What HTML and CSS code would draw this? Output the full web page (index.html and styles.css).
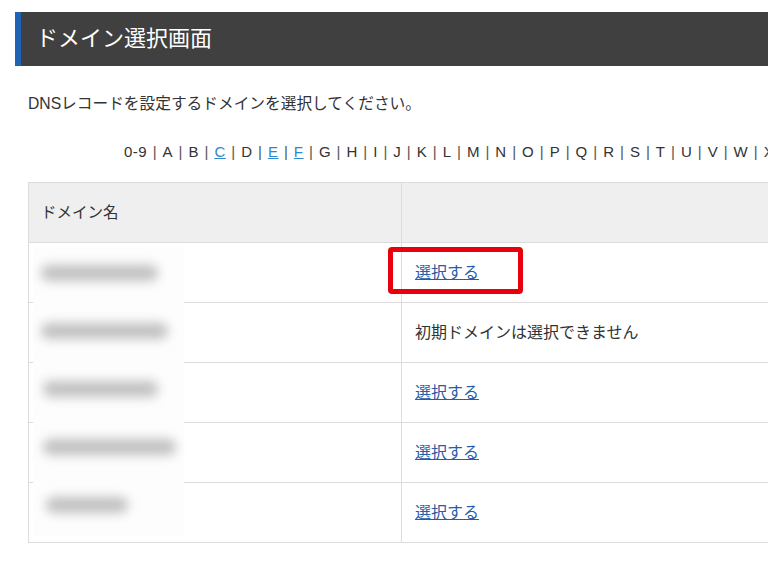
FILE: index.html
```html
<!DOCTYPE html>
<html lang="ja">
<head>
<meta charset="utf-8">
<title>ドメイン選択画面</title>
<link rel="stylesheet" href="styles.css">
</head>
<body>
<div class="page">
  <h1 class="title-bar">ドメイン選択画面</h1>
  <p class="lead">DNSレコードを設定するドメインを選択してください。</p>
  <nav class="alpha">
    <span>0-9</span><span class="sep">|</span>
    <span>A</span><span class="sep">|</span>
    <span>B</span><span class="sep">|</span>
    <a href="#">C</a><span class="sep">|</span>
    <span>D</span><span class="sep">|</span>
    <a href="#">E</a><span class="sep">|</span>
    <a href="#">F</a><span class="sep">|</span>
    <span>G</span><span class="sep">|</span>
    <span>H</span><span class="sep">|</span>
    <span>I</span><span class="sep">|</span>
    <span>J</span><span class="sep">|</span>
    <span>K</span><span class="sep">|</span>
    <span>L</span><span class="sep">|</span>
    <span>M</span><span class="sep">|</span>
    <span>N</span><span class="sep">|</span>
    <span>O</span><span class="sep">|</span>
    <span>P</span><span class="sep">|</span>
    <span>Q</span><span class="sep">|</span>
    <span>R</span><span class="sep">|</span>
    <span>S</span><span class="sep">|</span>
    <span>T</span><span class="sep">|</span>
    <span>U</span><span class="sep">|</span>
    <span>V</span><span class="sep">|</span>
    <span>W</span><span class="sep">|</span>
    <span>X</span><span class="sep">|</span>
    <span>Y</span><span class="sep">|</span>
    <span>Z</span>
  </nav>
  <div class="table">
    <div class="cell head c1">ドメイン名</div>
    <div class="cell head c2"></div>

    <div class="cell c1"></div>
    <div class="cell c2 marked"><a href="#">選択する</a><span class="highlight"></span></div>

    <div class="cell c1"></div>
    <div class="cell c2">初期ドメインは選択できません</div>

    <div class="cell c1"></div>
    <div class="cell c2"><a href="#">選択する</a></div>

    <div class="cell c1"></div>
    <div class="cell c2"><a href="#">選択する</a></div>

    <div class="cell c1"></div>
    <div class="cell c2"><a href="#">選択する</a></div>

    <div class="blur-patch">
      <div class="blur-row"><span class="blur w1"></span></div>
      <div class="blur-row"><span class="blur w2"></span></div>
      <div class="blur-row"><span class="blur w3"></span></div>
      <div class="blur-row"><span class="blur w4"></span></div>
      <div class="blur-row"><span class="blur w5"></span></div>
    </div>
  </div>
</div>
</body>
</html>
```
FILE: styles.css
```css
html, body {
  margin: 0;
  padding: 0;
  background: #fff;
  overflow: hidden;
}
body {
  font-family: "Liberation Sans", "Noto Sans CJK JP", sans-serif;
  color: #333;
  font-size: 15.5px;
}
.page {
  padding-top: 12px;
  width: 1000px;
}
.title-bar {
  margin: 0 0 0 15px;
  height: 54px;
  box-sizing: border-box;
  background: #404040;
  border-left: 6px solid #1f63b5;
  color: #fff;
  font-size: 22px;
  font-weight: normal;
  line-height: 54px;
  padding-left: 15px;
}
.lead {
  margin: 28px 0 0 28px;
  line-height: 20px;
  font-size: 15.7px;
}
.alpha {
  margin: 28px 0 0 124px;
  line-height: 20px;
  white-space: nowrap;
  font-size: 15px;
  letter-spacing: 0.5px;
  display: flex;
}
.alpha a {
  color: #2f86cf;
  text-decoration: underline;
}
.alpha .sep {
  margin: 0 5.5px;
  color: #555;
}
.table {
  position: relative;
  margin: 20px 0 0 28px;
  width: 900px;
  border: 1px solid #dcdcdc;
  display: grid;
  grid-template-columns: 372px 1fr;
  grid-template-rows: 59px repeat(5, 60px);
}
.cell {
  border-top: 1px solid #dcdcdc;
  display: flex;
  align-items: center;
  box-sizing: border-box;
  padding-bottom: 3px;
  font-size: 16px;
}
.cell.head {
  border-top: none;
  background: #efefef;
  font-size: 15.5px;
  padding-bottom: 4px;
}
.c1 {
  padding-left: 12px;
}
.c2 {
  border-left: 1px solid #dcdcdc;
  padding-left: 13px;
}
.c2 a {
  color: #2a5ba8;
  text-decoration: underline;
}
.marked {
  position: relative;
}
.highlight {
  position: absolute;
  left: -14px;
  top: 4px;
  width: 135px;
  height: 47px;
  box-sizing: border-box;
  border: 5px solid #e8000d;
  border-radius: 4px;
}
.blur-patch {
  position: absolute;
  left: 4px;
  top: 63px;
  width: 151px;
  height: 290px;
  background: #fdfdfd;
  display: flex;
  flex-direction: column;
}
.blur-row {
  height: 60px;
  display: flex;
  align-items: center;
  padding-left: 8px;
  padding-bottom: 4px;
  box-sizing: border-box;
}
.blur {
  display: block;
  height: 16px;
  border-radius: 8px;
  background: #c0c0c0;
  filter: blur(5.5px);
}
.w1 { width: 117px; }
.w2 { width: 127px; }
.w3 { width: 115px; margin-left: 2px; }
.w4 { width: 133px; margin-left: 2px; }
.w5 { width: 82px; margin-left: 5px; }
```
